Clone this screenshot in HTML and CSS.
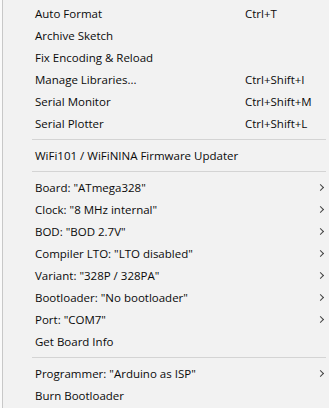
FILE: index.html
```html
<!DOCTYPE html>
<html lang="en">
<head>
    <meta charset="UTF-8">
    <title>Tools menu</title>
    <link rel="stylesheet" href="styles.css">
</head>
<body>
    <div class="edge"></div>
    <div class="menu">
        <div class="item"><span class="label">Auto Format</span><span class="key">Ctrl+T</span></div>
        <div class="item"><span class="label">Archive Sketch</span></div>
        <div class="item"><span class="label">Fix Encoding &amp; Reload</span></div>
        <div class="item"><span class="label">Manage Libraries...</span><span class="key">Ctrl+Shift+I</span></div>
        <div class="item"><span class="label">Serial Monitor</span><span class="key">Ctrl+Shift+M</span></div>
        <div class="item"><span class="label">Serial Plotter</span><span class="key">Ctrl+Shift+L</span></div>
        <div class="sep"></div>
        <div class="item"><span class="label">WiFi101 / WiFiNINA Firmware Updater</span></div>
        <div class="sep"></div>
        <div class="item sub"><span class="label">Board: "ATmega328"</span></div>
        <div class="item sub"><span class="label">Clock: "8 MHz internal"</span></div>
        <div class="item sub"><span class="label">BOD: "BOD 2.7V"</span></div>
        <div class="item sub"><span class="label">Compiler LTO: "LTO disabled"</span></div>
        <div class="item sub"><span class="label">Variant: "328P / 328PA"</span></div>
        <div class="item sub"><span class="label">Bootloader: "No bootloader"</span></div>
        <div class="item sub"><span class="label">Port: "COM7"</span></div>
        <div class="item"><span class="label">Get Board Info</span></div>
        <div class="sep"></div>
        <div class="item sub"><span class="label">Programmer: "Arduino as ISP"</span></div>
        <div class="item"><span class="label">Burn Bootloader</span></div>
    </div>
</body>
</html>
```
FILE: styles.css
```css
html, body {
    margin: 0;
    padding: 0;
    height: 100%;
}
body {
    display: flex;
    background-color: #f2f2f2;
    font-family: "Open Sans", "Noto Sans", sans-serif;
    font-size: 11.5px;
    color: #0a0a0a;
    overflow: hidden;
}
.edge {
    width: 2px;
    background-color: #fafafa;
    border-right: 1px solid #c8c8c8;
    flex-shrink: 0;
}
.menu {
    flex: 1;
    padding-top: 2px;
}
.item {
    display: flex;
    align-items: center;
    height: 22px;
    padding-left: 32px;
    padding-right: 2px;
}
.label {
    flex: 1;
    white-space: nowrap;
}
.key {
    width: 82px;
}
.sub::after {
    content: "";
    width: 4px;
    height: 4px;
    border-top: 1.3px solid #444;
    border-right: 1.3px solid #444;
    transform: rotate(45deg);
    margin-right: 4px;
}
.sep {
    height: 1px;
    margin: 5px 3px 4px 29px;
    background-color: #d4d4d4;
}
```
